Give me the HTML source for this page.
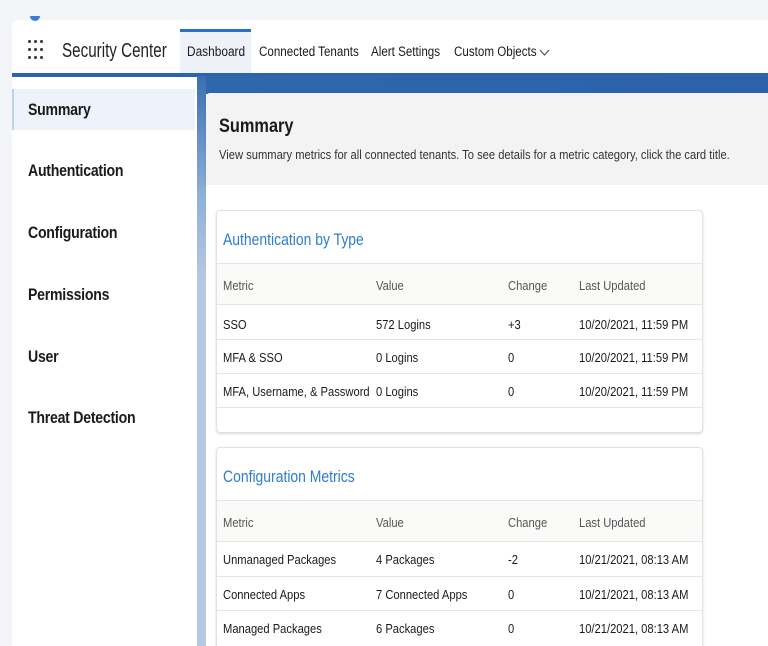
<!DOCTYPE html>
<html><head><meta charset="utf-8"><style>
*{box-sizing:border-box;margin:0;padding:0}
html,body{width:768px;height:646px;overflow:hidden}
body{background:#f3f5f8;font-family:"Liberation Sans",sans-serif;color:#1a1a1a;position:relative}
.abs{position:absolute}
.t{white-space:nowrap;transform-origin:0 0}
.dot{position:absolute;width:3px;height:3px;background:#444;border-radius:1px}
.side{font-weight:bold;font-size:17px;letter-spacing:-0.3px;left:28px;transform:scaleX(0.83)}
.card{position:absolute;left:216px;width:487px;background:#fff;border:1px solid #e2e2e2;border-radius:4px;box-shadow:0 1px 2px rgba(0,0,0,.15);overflow:hidden}
.ct{position:absolute;left:6px;color:#2f7dcc;font-size:17px;white-space:nowrap;transform:scaleX(0.82);transform-origin:0 0}
.hr{position:absolute;left:0;width:100%;background:#fafaf9;border-top:1px solid #e5e5e5;border-bottom:1px solid #e5e5e5}
.row{position:absolute;left:0;width:100%;border-bottom:1px solid #e5e5e5}
.c{position:absolute;font-size:13px;white-space:nowrap;transform:scaleX(0.86);transform-origin:0 0}
</style></head><body>
<div class="abs" style="left:12px;top:20px;width:756px;height:626px;background:#fff;border-radius:6px 0 0 0"></div>
<div class="abs" style="left:30px;top:16px;width:10px;height:5px;background:#3a7bd5;border-radius:0 0 5px 5px"></div>
<div class="dot" style="left:28px;top:40px"></div><div class="dot" style="left:34px;top:40px"></div><div class="dot" style="left:40px;top:40px"></div>
<div class="dot" style="left:28px;top:48px"></div><div class="dot" style="left:34px;top:48px"></div><div class="dot" style="left:40px;top:48px"></div>
<div class="dot" style="left:28px;top:56px"></div><div class="dot" style="left:34px;top:56px"></div><div class="dot" style="left:40px;top:56px"></div>
<div class="abs t" style="left:62px;top:40px;font-size:20px;color:#222;transform:scaleX(0.76)">Security Center</div>
<div class="abs" style="left:180px;top:29px;width:71px;height:45px;background:#eef1f8;border-top:3px solid #2a6fc9"></div>
<div class="abs t" style="left:187px;top:44px;font-size:13.5px;transform:scaleX(0.88)">Dashboard</div>
<div class="abs t" style="left:259px;top:44px;font-size:13.5px;transform:scaleX(0.86)">Connected Tenants</div>
<div class="abs t" style="left:371px;top:44px;font-size:13.5px;transform:scaleX(0.86)">Alert Settings</div>
<div class="abs t" style="left:454px;top:44px;font-size:13.5px;transform:scaleX(0.86)">Custom Objects</div>
<svg class="abs" style="left:539px;top:49px" width="11" height="8"><path d="M1 1 L5.5 6 L10 1" fill="none" stroke="#555" stroke-width="1.2"/></svg>
<div class="abs" style="left:12px;top:73px;width:756px;height:4px;background:#2a64ad"></div>
<div class="abs" style="left:197px;top:76px;width:571px;height:18px;background:linear-gradient(90deg,#2f66ac,#2c62aa)"></div>
<div class="abs" style="left:197px;top:76px;width:9px;height:570px;background:linear-gradient(180deg,#3a6fb0 0,#8fb0d8 120px,#b5c7e2 200px,#b5c7e2)"></div>
<div class="abs" style="left:12px;top:77px;width:185px;height:569px;background:#fff"></div>
<div class="abs" style="left:12px;top:89px;width:183px;height:41px;background:#eef3fb;border-left:2px solid #bcd3f0"></div>
<div class="abs t side" style="top:100px">Summary</div>
<div class="abs t side" style="top:161px">Authentication</div>
<div class="abs t side" style="top:223px">Configuration</div>
<div class="abs t side" style="top:285px">Permissions</div>
<div class="abs t side" style="top:347px">User</div>
<div class="abs t side" style="top:408px">Threat Detection</div>
<div class="abs" style="left:206px;top:93px;width:562px;height:92px;background:#f3f3f3;border-radius:4px 0 0 0;box-shadow:0 1px 2px rgba(0,0,0,.12)"></div>
<div class="abs t" style="left:219px;top:116px;font-size:19px;font-weight:bold;transform:scaleX(0.86)">Summary</div>
<div class="abs t" style="left:219px;top:147px;font-size:13px;color:#333;transform:scaleX(0.86)">View summary metrics for all connected tenants. To see details for a metric category, click the card title.</div>
<div class="abs" style="left:206px;top:185px;width:562px;height:461px;background:#fff"></div>
<div class="card" style="top:210px;height:223px">
 <div class="ct" style="top:19px">Authentication by Type</div>
 <div class="hr" style="top:52px;height:42px"></div>
 <div class="c" style="left:6px;top:67px;color:#555">Metric</div><div class="c" style="left:159px;top:67px;color:#555">Value</div><div class="c" style="left:291px;top:67px;color:#555">Change</div><div class="c" style="left:362px;top:67px;color:#555">Last Updated</div>
 <div class="row" style="top:94px;height:35px"></div>
 <div class="c" style="left:6px;top:106px">SSO</div><div class="c" style="left:159px;top:106px">572 Logins</div><div class="c" style="left:291px;top:106px">+3</div><div class="c" style="left:362px;top:106px">10/20/2021, 11:59 PM</div>
 <div class="row" style="top:129px;height:34px"></div>
 <div class="c" style="left:6px;top:139px">MFA &amp; SSO</div><div class="c" style="left:159px;top:139px">0 Logins</div><div class="c" style="left:291px;top:139px">0</div><div class="c" style="left:362px;top:139px">10/20/2021, 11:59 PM</div>
 <div class="row" style="top:163px;height:34px"></div>
 <div class="c" style="left:6px;top:173px">MFA, Username, &amp; Password</div><div class="c" style="left:159px;top:173px">0 Logins</div><div class="c" style="left:291px;top:173px">0</div><div class="c" style="left:362px;top:173px">10/20/2021, 11:59 PM</div>
</div>
<div class="card" style="top:447px;height:210px">
 <div class="ct" style="top:19px">Configuration Metrics</div>
 <div class="hr" style="top:52px;height:42px"></div>
 <div class="c" style="left:6px;top:67px;color:#555">Metric</div><div class="c" style="left:159px;top:67px;color:#555">Value</div><div class="c" style="left:291px;top:67px;color:#555">Change</div><div class="c" style="left:362px;top:67px;color:#555">Last Updated</div>
 <div class="row" style="top:94px;height:35px"></div>
 <div class="c" style="left:6px;top:104px">Unmanaged Packages</div><div class="c" style="left:159px;top:104px">4 Packages</div><div class="c" style="left:291px;top:104px">-2</div><div class="c" style="left:362px;top:104px">10/21/2021, 08:13 AM</div>
 <div class="row" style="top:129px;height:34px"></div>
 <div class="c" style="left:6px;top:139px">Connected Apps</div><div class="c" style="left:159px;top:139px">7 Connected Apps</div><div class="c" style="left:291px;top:139px">0</div><div class="c" style="left:362px;top:139px">10/21/2021, 08:13 AM</div>
 <div class="c" style="left:6px;top:173px">Managed Packages</div><div class="c" style="left:159px;top:173px">6 Packages</div><div class="c" style="left:291px;top:173px">0</div><div class="c" style="left:362px;top:173px">10/21/2021, 08:13 AM</div>
</div>
</body></html>
